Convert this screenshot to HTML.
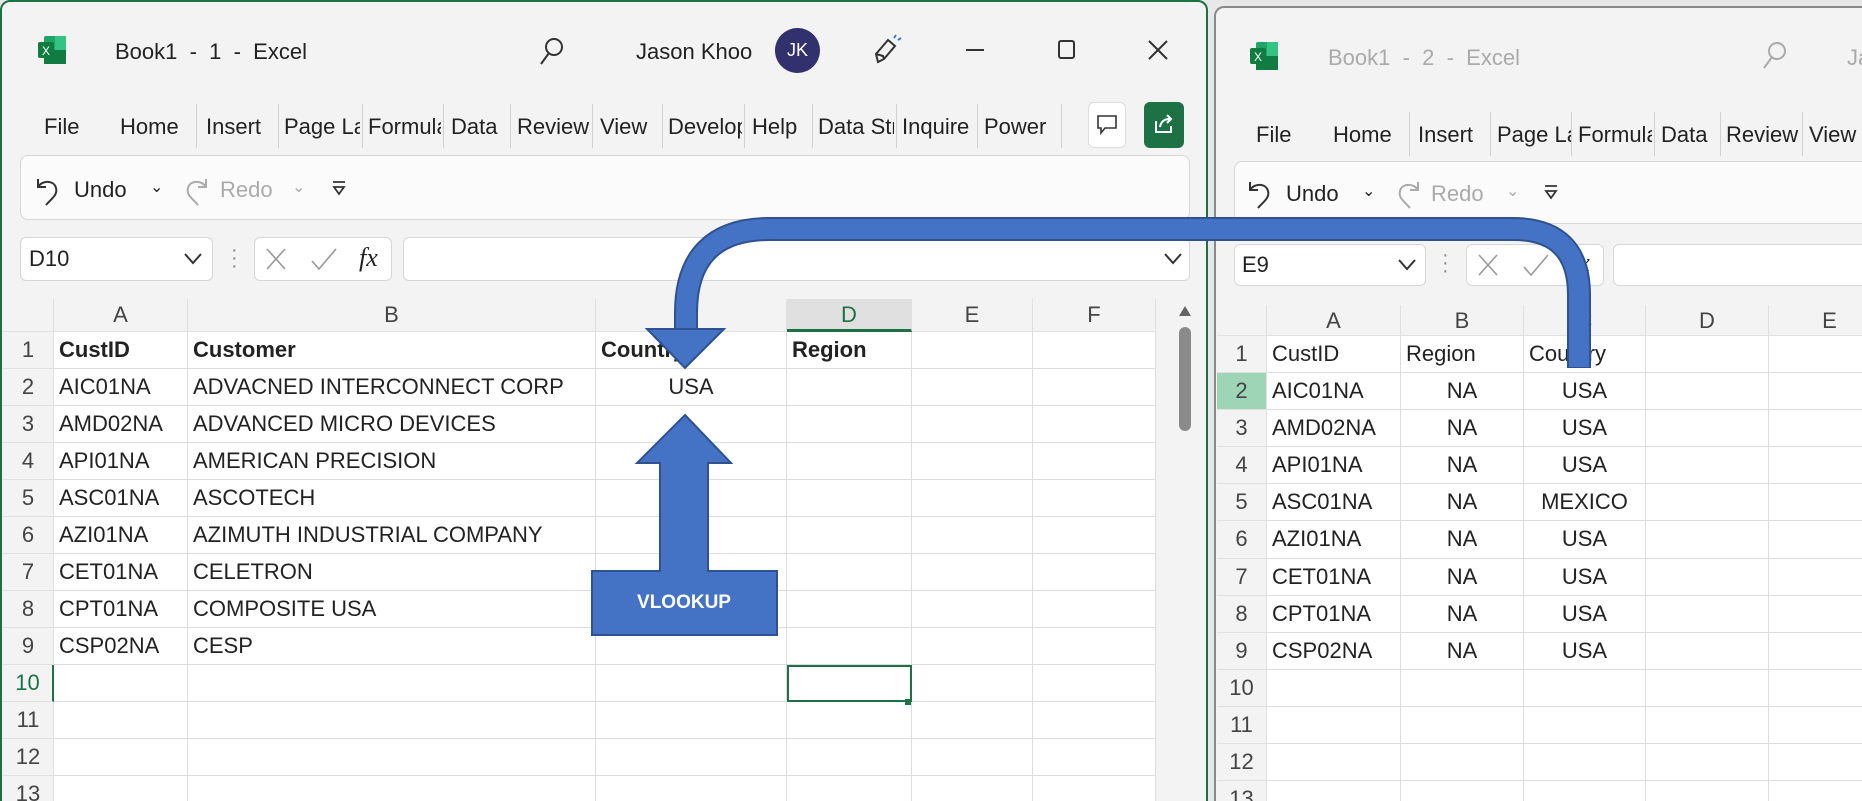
<!DOCTYPE html>
<html><head><meta charset="utf-8"><style>
*{box-sizing:border-box;margin:0;padding:0}
html,body{width:1862px;height:801px;overflow:hidden}
body{background:#e8e8e8;font-family:"Liberation Sans",sans-serif;color:#222}
#root{position:relative;width:1862px;height:801px;overflow:hidden}
.a{position:absolute;white-space:nowrap}
.win1{position:absolute;left:0;top:0;width:1208px;height:900px;border:2px solid #1e7145;border-radius:10px;background:#f3f3f3;overflow:hidden}
.win2{position:absolute;left:1214px;top:6px;width:700px;height:900px;border:2px solid #8a8a8a;border-radius:10px;background:#f3f3f3;overflow:hidden}
.tab{position:absolute;font-size:22px;color:#222;overflow:hidden;white-space:nowrap}
.sep{position:absolute;width:1px;height:44px;background:#d0d0d0}
.box{position:absolute;background:#fbfbfb;border:1px solid #d6d6d6;border-radius:8px}
.wbox{position:absolute;background:#fff;border:1px solid #d6d6d6;border-radius:6px}
.grid{position:absolute;display:grid;background:#fff}
.grid div{border-right:1px solid #dcdcdc;border-bottom:1px solid #dcdcdc;font-size:22px;line-height:36px;padding-left:5px;white-space:nowrap;overflow:visible}
.grid .h{background:#f3f3f3;color:#444;text-align:center;padding:0;border-color:#e0e0e0;line-height:32px}
.grid .r{background:#f3f3f3;color:#444;text-align:center;padding:0;border-color:#e0e0e0}
.grid .c{text-align:center;padding:0}
.grid .b{font-weight:bold}
</style></head><body><div id="root">

<div class="win1">
  <svg class="a" style="left:34px;top:32px" width="32" height="32" viewBox="0 0 32 32"><rect x="8" y="2" width="22" height="28" rx="2" fill="#21a366"/><rect x="8" y="16" width="22" height="14" fill="#107c41"/><rect x="19" y="2" width="11" height="14" fill="#33c481"/><rect x="2" y="8" width="16" height="16" rx="2" fill="#107c41"/><text x="10" y="21" font-size="12" fill="#fff" text-anchor="middle" font-family="Liberation Sans">X</text></svg>
  <div class="a" style="left:113px;top:37px;font-size:22px">Book1&nbsp; - &nbsp;1&nbsp; - &nbsp;Excel</div>
  <svg class="a" style="left:535px;top:34px" width="28" height="30"><circle cx="17" cy="11" r="8" fill="none" stroke="#333" stroke-width="2"/><line x1="12" y1="17" x2="4" y2="28" stroke="#333" stroke-width="2"/></svg>
  <div class="a" style="left:634px;top:37px;font-size:22px">Jason Khoo</div>
  <div class="a" style="left:773px;top:26px;width:45px;height:45px;border-radius:50%;background:#33306e;color:#fff;font-size:18px;line-height:45px;text-align:center">JK</div>
  <svg class="a" style="left:868px;top:30px" width="34" height="34"><path d="M8 30 L6 22 L18 8 L25 14 L14 27 Z M6 22 L13 24 L14 27" fill="none" stroke="#333" stroke-width="2"/><path d="M24 6 l2 -3 M28 8 l3 -2" stroke="#3a7bd5" stroke-width="2"/></svg>
  <div class="a" style="left:964px;top:47px;width:18px;height:2px;background:#333"></div>
  <div class="a" style="left:1056px;top:38px;width:17px;height:19px;border:2px solid #333;border-radius:3px"></div>
  <svg class="a" style="left:1146px;top:38px" width="20" height="20"><path d="M1 1 L19 19 M19 1 L1 19" stroke="#333" stroke-width="2"/></svg>
  <div class="tab" style="left:42px;top:112px">File</div>
  <div class="tab" style="left:118px;top:112px;width:74px">Home</div><div class="sep" style="left:194px;top:102px"></div>
  <div class="tab" style="left:204px;top:112px;width:70px">Insert</div><div class="sep" style="left:276px;top:102px"></div>
  <div class="tab" style="left:282px;top:112px;width:76px">Page Layout</div><div class="sep" style="left:360px;top:102px"></div>
  <div class="tab" style="left:366px;top:112px;width:73px">Formulas</div><div class="sep" style="left:441px;top:102px"></div>
  <div class="tab" style="left:449px;top:112px;width:57px">Data</div><div class="sep" style="left:508px;top:102px"></div>
  <div class="tab" style="left:515px;top:112px;width:73px">Review</div><div class="sep" style="left:590px;top:102px"></div>
  <div class="tab" style="left:598px;top:112px;width:60px">View</div><div class="sep" style="left:660px;top:102px"></div>
  <div class="tab" style="left:666px;top:112px;width:74px">Developer</div><div class="sep" style="left:742px;top:102px"></div>
  <div class="tab" style="left:750px;top:112px;width:58px">Help</div><div class="sep" style="left:810px;top:102px"></div>
  <div class="tab" style="left:816px;top:112px;width:76px">Data Streamer</div><div class="sep" style="left:894px;top:102px"></div>
  <div class="tab" style="left:900px;top:112px;width:73px">Inquire</div><div class="sep" style="left:975px;top:102px"></div>
  <div class="tab" style="left:982px;top:112px;width:76px">Power</div><div class="sep" style="left:1059px;top:102px"></div>
  <div class="a" style="left:1086px;top:100px;width:38px;height:46px;background:#fff;border:1px solid #ddd;border-radius:6px"></div>
  <svg class="a" style="left:1094px;top:112px" width="22" height="22"><path d="M2 2 H20 V14 H9 L5 19 V14 H2 Z" fill="none" stroke="#333" stroke-width="1.6"/></svg>
  <div class="a" style="left:1142px;top:100px;width:40px;height:46px;background:#1e7145;border-radius:6px"></div>
  <svg class="a" style="left:1150px;top:110px" width="24" height="24"><path d="M4 9 V20 H19 V14 M8 15 C9 9 13 7 18 7 M15 3 L19 7 L15 11" fill="none" stroke="#fff" stroke-width="2"/></svg>
  <div class="box" style="left:18px;top:153px;width:1170px;height:65px"></div>
  <svg class="a" style="left:32px;top:173px" width="30" height="32"><path d="M4 4 V12 H12 M4 12 C8 5 20 5 22 13 C24 20 17 24 12 30" fill="none" stroke="#333" stroke-width="2"/></svg>
  <div class="a" style="left:72px;top:175px;font-size:22px">Undo</div>
  <div class="a" style="left:148px;top:175px;font-size:16px">&#8964;</div>
  <svg class="a" style="left:178px;top:173px" width="30" height="32"><path d="M26 4 V12 H18 M26 12 C22 5 10 5 8 13 C6 20 13 24 18 30" fill="none" stroke="#aaa" stroke-width="2"/></svg>
  <div class="a" style="left:218px;top:175px;font-size:22px;color:#aaa">Redo</div>
  <div class="a" style="left:290px;top:175px;font-size:16px;color:#aaa">&#8964;</div>
  <svg class="a" style="left:330px;top:178px" width="14" height="18"><path d="M1 2 H13 M2 7 L7 14 L12 7 Z" fill="none" stroke="#333" stroke-width="1.8"/></svg>
  <div class="wbox" style="left:18px;top:235px;width:193px;height:44px"></div>
  <div class="a" style="left:27px;top:244px;font-size:22px">D10</div>
  <svg class="a" style="left:182px;top:251px" width="18" height="12"><path d="M1 1 L9 10 L17 1" fill="none" stroke="#333" stroke-width="2"/></svg>
  <div class="a" style="left:229px;top:244px;color:#888;font-size:20px;line-height:8px">·<br>·<br>·</div>
  <div class="wbox" style="left:252px;top:235px;width:138px;height:44px"></div>
  <svg class="a" style="left:262px;top:245px" width="90" height="26"><path d="M3 2 L21 22 M21 2 L3 22" stroke="#999" stroke-width="1.6"/><path d="M48 14 L55 22 L72 2" fill="none" stroke="#999" stroke-width="1.6"/></svg>
  <div class="a" style="left:357px;top:241px;font-size:26px;font-family:'Liberation Serif',serif;font-style:italic">fx</div>
  <div class="wbox" style="left:401px;top:235px;width:787px;height:44px"></div>
  <svg class="a" style="left:1162px;top:251px" width="18" height="12"><path d="M1 1 L9 10 L17 1" fill="none" stroke="#333" stroke-width="2"/></svg>
  <div class="grid" style="left:1px;top:297px;grid-template-columns:51px 134px 408px 191px 125px 121px 123px;grid-template-rows:33px repeat(14,37px)">
    <div class="h"></div><div class="h">A</div><div class="h">B</div><div class="h">C</div><div class="h" style="background:#e0e0e0;color:#1e7145;border-bottom:3px solid #1e7145">D</div><div class="h">E</div><div class="h">F</div>
    <div class="r">1</div><div class="b">CustID</div><div class="b">Customer</div><div class="b">Country</div><div class="b">Region</div><div></div><div></div>
    <div class="r">2</div><div>AIC01NA</div><div>ADVACNED INTERCONNECT CORP</div><div class="c">USA</div><div></div><div></div><div></div>
    <div class="r">3</div><div>AMD02NA</div><div>ADVANCED MICRO DEVICES</div><div></div><div></div><div></div><div></div>
    <div class="r">4</div><div>API01NA</div><div>AMERICAN PRECISION</div><div></div><div></div><div></div><div></div>
    <div class="r">5</div><div>ASC01NA</div><div>ASCOTECH</div><div></div><div></div><div></div><div></div>
    <div class="r">6</div><div>AZI01NA</div><div>AZIMUTH INDUSTRIAL COMPANY</div><div></div><div></div><div></div><div></div>
    <div class="r">7</div><div>CET01NA</div><div>CELETRON</div><div></div><div></div><div></div><div></div>
    <div class="r">8</div><div>CPT01NA</div><div>COMPOSITE USA</div><div></div><div></div><div></div><div></div>
    <div class="r">9</div><div>CSP02NA</div><div>CESP</div><div></div><div></div><div></div><div></div>
    <div class="r" style="color:#1e7145;border-right:2px solid #1e7145">10</div><div></div><div></div><div></div><div style="border:2px solid #1e7145"></div><div></div><div></div>
    <div class="r">11</div><div></div><div></div><div></div><div></div><div></div><div></div>
    <div class="r">12</div><div></div><div></div><div></div><div></div><div></div><div></div>
    <div class="r">13</div><div></div><div></div><div></div><div></div><div></div><div></div>
    <div class="r">14</div><div></div><div></div><div></div><div></div><div></div><div></div>
  </div>
  <div class="a" style="left:1155px;top:297px;width:50px;height:600px;background:#f3f3f3"></div>
  <svg class="a" style="left:1176px;top:302px" width="14" height="14"><path d="M7 2 L13 12 H1 Z" fill="#666"/></svg>
  <div class="a" style="left:1177px;top:325px;width:12px;height:104px;border-radius:6px;background:#8a8a8a"></div>
  <div class="a" style="left:903px;top:697px;width:6px;height:6px;background:#1e7145"></div>
</div>

<div class="win2">
  <svg class="a" style="left:32px;top:32px" width="32" height="32" viewBox="0 0 32 32"><rect x="8" y="2" width="22" height="28" rx="2" fill="#21a366"/><rect x="8" y="16" width="22" height="14" fill="#107c41"/><rect x="19" y="2" width="11" height="14" fill="#33c481"/><rect x="2" y="8" width="16" height="16" rx="2" fill="#107c41"/><text x="10" y="21" font-size="12" fill="#fff" text-anchor="middle" font-family="Liberation Sans">X</text></svg>
  <div class="a" style="left:112px;top:37px;font-size:22px;color:#aaa">Book1&nbsp; - &nbsp;2&nbsp; - &nbsp;Excel</div>
  <svg class="a" style="left:544px;top:32px" width="28" height="30"><circle cx="17" cy="11" r="8" fill="none" stroke="#aaa" stroke-width="2"/><line x1="12" y1="17" x2="4" y2="28" stroke="#aaa" stroke-width="2"/></svg>
  <div class="a" style="left:631px;top:37px;font-size:22px;color:#aaa">Jason</div>
  <div class="tab" style="left:40px;top:114px">File</div>
  <div class="tab" style="left:117px;top:114px;width:74px">Home</div><div class="sep" style="left:193px;top:104px"></div>
  <div class="tab" style="left:202px;top:114px;width:70px">Insert</div><div class="sep" style="left:274px;top:104px"></div>
  <div class="tab" style="left:281px;top:114px;width:74px">Page Layout</div><div class="sep" style="left:355px;top:104px"></div>
  <div class="tab" style="left:362px;top:114px;width:74px">Formulas</div><div class="sep" style="left:438px;top:104px"></div>
  <div class="tab" style="left:445px;top:114px;width:57px">Data</div><div class="sep" style="left:504px;top:104px"></div>
  <div class="tab" style="left:510px;top:114px;width:74px">Review</div><div class="sep" style="left:586px;top:104px"></div>
  <div class="tab" style="left:593px;top:114px;width:60px">View</div>
  <div class="box" style="left:18px;top:153px;width:700px;height:63px"></div>
  <svg class="a" style="left:30px;top:170px" width="30" height="32"><path d="M4 4 V12 H12 M4 12 C8 5 20 5 22 13 C24 20 17 24 12 30" fill="none" stroke="#333" stroke-width="2"/></svg>
  <div class="a" style="left:70px;top:173px;font-size:22px">Undo</div>
  <div class="a" style="left:146px;top:173px;font-size:16px">&#8964;</div>
  <svg class="a" style="left:176px;top:170px" width="30" height="32"><path d="M26 4 V12 H18 M26 12 C22 5 10 5 8 13 C6 20 13 24 18 30" fill="none" stroke="#aaa" stroke-width="2"/></svg>
  <div class="a" style="left:215px;top:173px;font-size:22px;color:#aaa">Redo</div>
  <div class="a" style="left:290px;top:173px;font-size:16px;color:#aaa">&#8964;</div>
  <svg class="a" style="left:328px;top:176px" width="14" height="18"><path d="M1 2 H13 M2 7 L7 14 L12 7 Z" fill="none" stroke="#333" stroke-width="1.8"/></svg>
  <div class="wbox" style="left:18px;top:236px;width:192px;height:42px"></div>
  <div class="a" style="left:26px;top:244px;font-size:22px">E9</div>
  <svg class="a" style="left:182px;top:251px" width="18" height="12"><path d="M1 1 L9 10 L17 1" fill="none" stroke="#333" stroke-width="2"/></svg>
  <div class="a" style="left:226px;top:243px;color:#888;font-size:20px;line-height:8px">·<br>·<br>·</div>
  <div class="wbox" style="left:250px;top:236px;width:138px;height:42px"></div>
  <svg class="a" style="left:260px;top:245px" width="90" height="26"><path d="M3 2 L21 22 M21 2 L3 22" stroke="#999" stroke-width="1.6"/><path d="M48 14 L55 22 L72 2" fill="none" stroke="#999" stroke-width="1.6"/></svg>
  <div class="a" style="left:355px;top:240px;font-size:26px;font-family:'Liberation Serif',serif;font-style:italic">fx</div>
  <div class="wbox" style="left:397px;top:236px;width:400px;height:42px"></div>
  <div class="grid" style="left:1px;top:297px;grid-template-columns:50px 134px 123px 122px 123px 122px;grid-template-rows:31px repeat(14,37.1px)">
    <div class="h"></div><div class="h">A</div><div class="h">B</div><div class="h">C</div><div class="h">D</div><div class="h">E</div>
    <div class="r">1</div><div>CustID</div><div>Region</div><div>Country</div><div></div><div></div>
    <div class="r" style="background:#9fd5b7">2</div><div>AIC01NA</div><div class="c">NA</div><div class="c">USA</div><div></div><div></div>
    <div class="r">3</div><div>AMD02NA</div><div class="c">NA</div><div class="c">USA</div><div></div><div></div>
    <div class="r">4</div><div>API01NA</div><div class="c">NA</div><div class="c">USA</div><div></div><div></div>
    <div class="r">5</div><div>ASC01NA</div><div class="c">NA</div><div class="c">MEXICO</div><div></div><div></div>
    <div class="r">6</div><div>AZI01NA</div><div class="c">NA</div><div class="c">USA</div><div></div><div></div>
    <div class="r">7</div><div>CET01NA</div><div class="c">NA</div><div class="c">USA</div><div></div><div></div>
    <div class="r">8</div><div>CPT01NA</div><div class="c">NA</div><div class="c">USA</div><div></div><div></div>
    <div class="r">9</div><div>CSP02NA</div><div class="c">NA</div><div class="c">USA</div><div></div><div></div>
    <div class="r">10</div><div></div><div></div><div></div><div></div><div></div>
    <div class="r">11</div><div></div><div></div><div></div><div></div><div></div>
    <div class="r">12</div><div></div><div></div><div></div><div></div><div></div>
    <div class="r">13</div><div></div><div></div><div></div><div></div><div></div>
    <div class="r">14</div><div></div><div></div><div></div><div></div><div></div>
  </div>
</div>

<svg class="a" style="left:0;top:0" width="1862" height="801">
  <path d="M1579 368 V295 Q1579 229 1513 229 H770 Q686 229 686 313 V331" fill="none" stroke="#2f528f" stroke-width="24"/>
  <path d="M1579 367 V295 Q1579 229 1513 229 H770 Q686 229 686 313 V333" fill="none" stroke="#4472c4" stroke-width="20"/>
  <polygon points="647,329 724,329 685,368" fill="#4472c4" stroke="#2f528f" stroke-width="2"/>
  <polygon points="685,415 731,463 708,463 708,571 777,571 777,635 592,635 592,571 660,571 660,463 637,463" fill="#4472c4" stroke="#2f528f" stroke-width="2"/>
  <text x="684" y="608" font-family="Liberation Sans" font-size="19" font-weight="bold" fill="#fff" text-anchor="middle">VLOOKUP</text>
</svg>
</div></body></html>
